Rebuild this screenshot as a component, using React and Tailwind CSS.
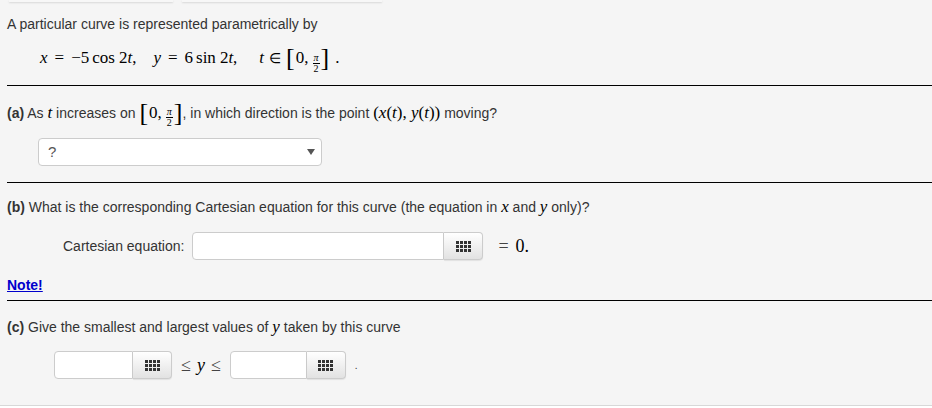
import React from 'react';

const serif = "font-['Liberation_Serif',serif]";

const Frac = () => (
  <span className="inline-flex flex-col items-center mx-[1px] text-[10px] leading-[10px]">
    <span className="italic px-[1px]">π</span>
    <span className="border-t border-black w-full text-center">2</span>
  </span>
);

const Interval = () => (
  <span className={`${serif} inline-flex items-center align-middle text-[17px] text-black -mt-[3px]`}>
    <span className="text-[26px] leading-none">[</span>
    <span className="ml-[1px]">0,</span>
    <span className="ml-[3px]">
      <Frac />
    </span>
    <span className="text-[26px] leading-none">]</span>
  </span>
);

const GridIcon = () => (
  <svg width="15" height="11" viewBox="0 0 15 11" fill="#333" shapeRendering="crispEdges">
    {[0, 4, 8].map((y) =>
      [0, 4, 8, 12].map((x) => <rect key={`${x}-${y}`} x={x} y={y} width="3" height="3" />)
    )}
  </svg>
);

const InputGroup = ({ inputClass }) => (
  <div className="flex h-[28px]">
    <div className={`bg-white border border-[#ccc] rounded-l-[4px] ${inputClass}`} />
    <div className="w-[39px] border border-l-0 border-[#ccc] rounded-r-[4px] bg-linear-to-b from-white to-[#e2e2e2] shadow-[0_1px_1px_rgba(0,0,0,0.08)] flex items-center justify-center">
      <GridIcon />
    </div>
  </div>
);

export default function App() {
  return (
    <div className="min-h-[408px] bg-[#f5f5f5] font-['Liberation_Sans',Arial,sans-serif] text-[14px] text-[#333] overflow-hidden">
      {/* leftover boxes from the section above */}
      <div className="h-[3px] flex pl-[9px] gap-[9px]">
        <div className="w-[164px] h-[2px] bg-[#f7f7f7] shadow-[0_1px_2px_rgba(0,0,0,0.12)]" />
        <div className="w-[200px] h-[2px] bg-[#f7f7f7] shadow-[0_1px_2px_rgba(0,0,0,0.12)]" />
      </div>

      <div className="pl-[7px]">
        <div className="mt-[12px] h-[18px] leading-[18px]">A particular curve is represented parametrically by</div>

        {/* parametric equations */}
        <div className={`${serif} mt-[11px] ml-[33px] h-[28px] flex items-center text-[17px] text-black`}>
          <span className="italic">x</span>
          <span className="mx-[7px]">=</span>
          <span>−5</span>
          <span className="ml-[3px]">cos</span>
          <span className="ml-[4px]">2</span>
          <span className="italic">t</span>
          <span>,</span>
          <span className="italic ml-[17px]">y</span>
          <span className="mx-[7px]">=</span>
          <span>6</span>
          <span className="ml-[3px]">sin</span>
          <span className="ml-[4px]">2</span>
          <span className="italic">t</span>
          <span>,</span>
          <span className="italic ml-[22px]">t</span>
          <span className="mx-[5px] text-[14px]">∈</span>
          <span className="inline-flex items-center">
            <span className="text-[26px] leading-none">[</span>
            <span className="ml-[1px]">0,</span>
            <span className="ml-[3px]">
              <Frac />
            </span>
            <span className="text-[26px] leading-none">]</span>
          </span>
          <span className="ml-[6px]">.</span>
        </div>

        <div className="mt-[13px] border-t border-black" />

        {/* part a */}
        <div className="mt-[15px] h-[24px] leading-[24px] whitespace-nowrap">
          <b>(a)</b> As <span className={`${serif} italic text-[17px] text-black`}>t</span> increases on <Interval />, in which direction is the point{' '}
          <span className={`${serif} text-[17px] text-black`}>
            (<i>x</i>(<i>t</i>), <i>y</i>(<i>t</i>))
          </span>{' '}
          moving?
        </div>

        <div className="mt-[13px] ml-[31px] w-[284px] h-[28px] bg-white border border-[#ccc] rounded-[4px] flex items-center justify-between pl-[9px] pr-[6px]">
          <span className="text-[#555] text-[15px]">?</span>
          <svg width="8" height="6" viewBox="0 0 8 6">
            <path d="M0 0 L8 0 L4 6 Z" fill="#555" />
          </svg>
        </div>

        <div className="mt-[16px] border-t border-black" />

        {/* part b */}
        <div className="mt-[15px] h-[18px] leading-[18px] whitespace-nowrap">
          <b>(b)</b> What is the corresponding Cartesian equation for this curve (the equation in{' '}
          <span className={`${serif} italic text-[17px] text-black`}>x</span> and{' '}
          <span className={`${serif} italic text-[17px] text-black`}>y</span> only)?
        </div>

        <div className="mt-[16px] ml-[56px] flex items-center">
          <span className="mr-[8px]">Cartesian equation:</span>
          <InputGroup inputClass="w-[252px]" />
          <span className={`${serif} ml-[15px] text-[18px] text-black`}>
            <span className="text-[#444]">=</span>
            <span className="ml-[7px]">0</span>.
          </span>
        </div>

        <div className="mt-[16px] h-[18px] leading-[18px]">
          <a href="#note" className="font-bold text-[#0000cc] underline">
            Note!
          </a>
        </div>

        <div className="mt-[6px] border-t border-black" />

        {/* part c */}
        <div className="mt-[17px] h-[18px] leading-[18px] whitespace-nowrap">
          <b>(c)</b> Give the smallest and largest values of{' '}
          <span className={`${serif} italic text-[17px] text-black`}>y</span> taken by this curve
        </div>

        <div className="mt-[15px] ml-[47px] flex items-center">
          <InputGroup inputClass="w-[79px]" />
          <span className={`${serif} mx-[9px] text-[18px] text-black flex items-center gap-[6px]`}>
            <span className="text-[#444]">≤</span>
            <span className="italic">y</span>
            <span className="text-[#444]">≤</span>
          </span>
          <InputGroup inputClass="w-[77px]" />
          <span className="ml-[9px] text-[10px]">.</span>
        </div>
      </div>

      <div className="mt-[26px] border-t border-[#d8d8d8] h-[3px] bg-white" />
    </div>
  );
}
